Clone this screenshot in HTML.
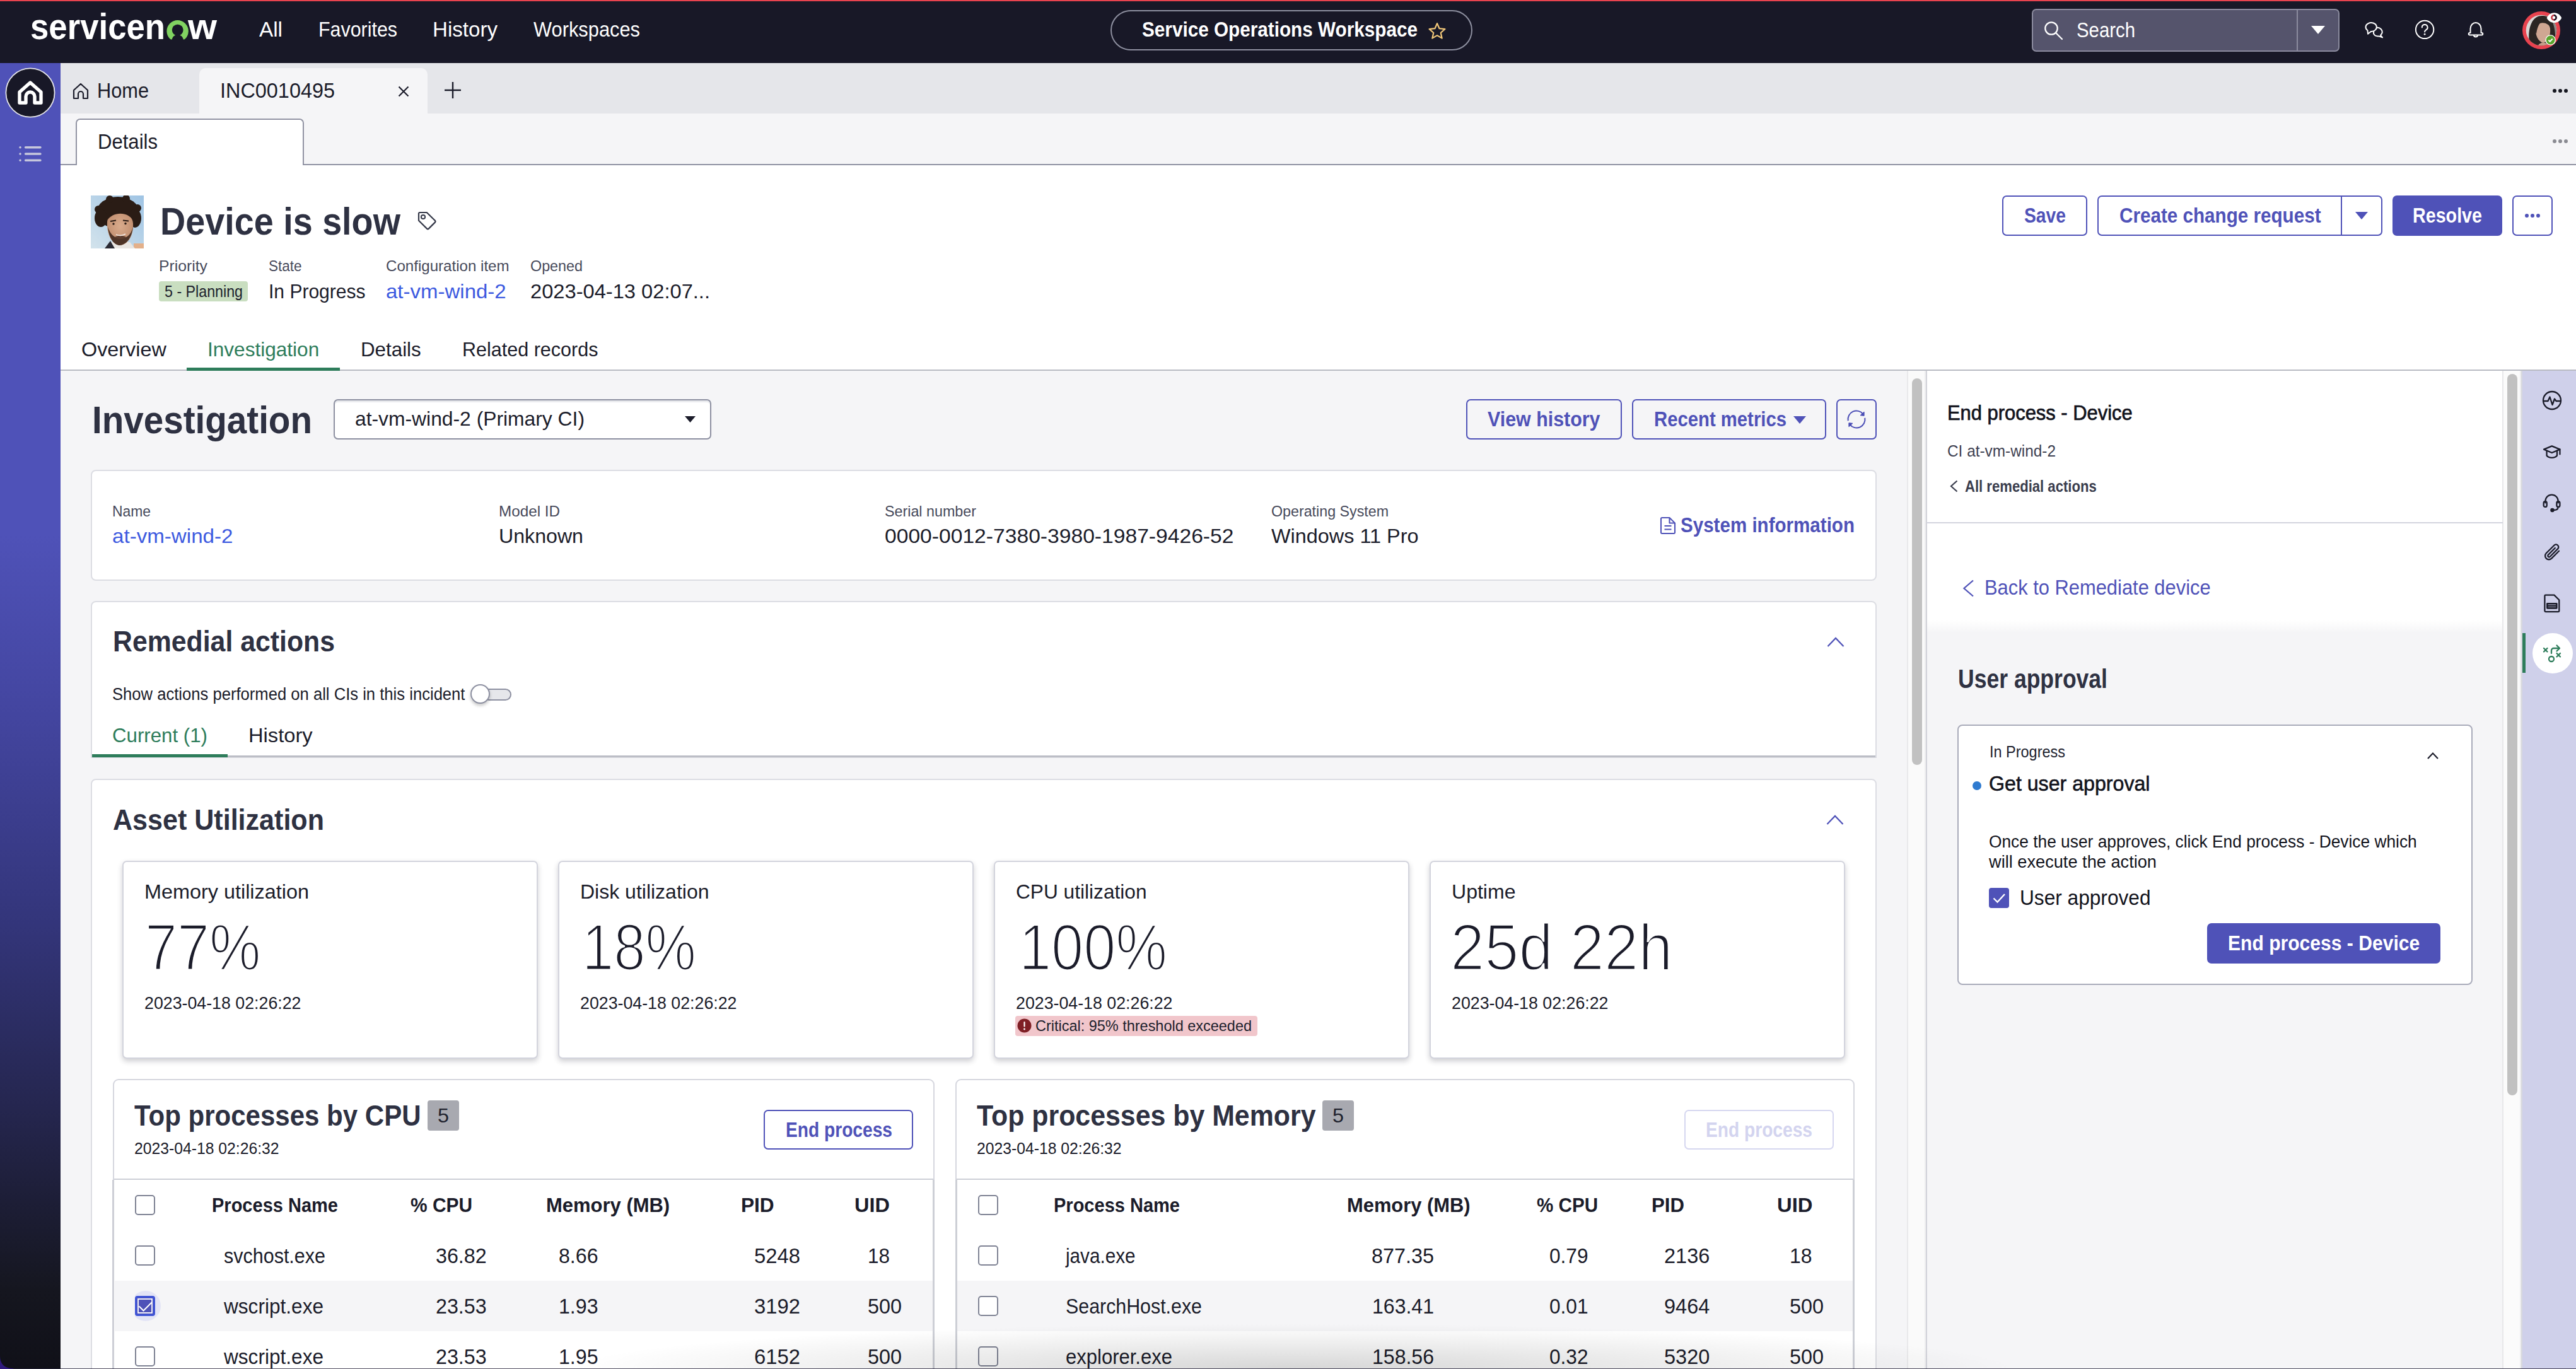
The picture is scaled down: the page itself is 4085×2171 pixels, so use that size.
<!DOCTYPE html>
<html lang="en"><head><meta charset="utf-8"><title>Device is slow | Service Operations Workspace</title>
<style>
html,body{margin:0;padding:0;}
body{width:4085px;height:2171px;background:#f5f5f7;font-family:"Liberation Sans",sans-serif;}
#app{position:relative;width:4085px;height:2171px;overflow:hidden;background:#f5f5f7;}
.b{position:absolute;box-sizing:border-box;display:block;}
.t{position:absolute;white-space:nowrap;transform-origin:0 50%;display:block;}
</style></head><body><div id="app">
<div class="b" style="left:0.0px;top:0.0px;width:4085.0px;height:2.2px;background:#e8434f;"></div>
<div class="b" style="left:0.0px;top:2.2px;width:4085.0px;height:97.8px;background:#181827;"></div>
<div class="b" style="left:96.0px;top:100.0px;width:3989.0px;height:80.0px;background:#e5e6ea;"></div>
<div class="b" style="left:96.0px;top:180.0px;width:3989.0px;height:82.0px;background:#f5f5f7;"></div>
<div class="b" style="left:96.0px;top:260.0px;width:3989.0px;height:2.0px;background:#9193a3;"></div>
<div class="b" style="left:96.0px;top:262.0px;width:3989.0px;height:324.0px;background:#ffffff;"></div>
<div class="b" style="left:96.0px;top:585.5px;width:3989.0px;height:2.5px;background:#b9bbc3;"></div>
<div class="b" style="left:96.0px;top:588.0px;width:3989.0px;height:1583.0px;background:#f5f5f7;"></div>
<div class="b" style="left:0.0px;top:100.0px;width:96.0px;height:2071.0px;background:linear-gradient(180deg,#4f52b8 0%,#4f52b8 36%,#43459f 50%,#33357a 66%,#25264f 80%,#15161f 94%,#101018 100%);"></div>
<span class="t" style="top:12.9px;font-size:58px;line-height:58px;color:#ffffff;font-weight:700;left:48.2px;transform:scaleX(0.9091);">servicen</span>
<span class="t" style="top:12.9px;font-size:58px;line-height:58px;color:#ffffff;font-weight:700;left:298.0px;transform:scaleX(1.0196);">w</span>
<svg class="b" style="left:262.0px;top:30.0px;" width="40" height="36" viewBox="0 0 40 36"><clipPath id="lo"><rect x="0" y="0" width="40" height="32.5"/></clipPath><circle cx="19.6" cy="19.3" r="17.2" fill="#81d361" clip-path="url(#lo)"/><circle cx="19.7" cy="17.600" r="8.900" fill="#181827"/><path d="M10.700 33.500 C11 28 15 25.200 19.700 25.200 C24.400 25.200 28.400 28 28.700 33.500 Z" fill="#181827"/></svg>
<span class="t" style="top:31.0px;font-size:32.5px;line-height:32.5px;color:#ffffff;left:411.0px;transform:scaleX(1.0244);">All</span>
<span class="t" style="top:31.0px;font-size:32.5px;line-height:32.5px;color:#ffffff;left:505.0px;transform:scaleX(0.9353);">Favorites</span>
<span class="t" style="top:31.0px;font-size:32.5px;line-height:32.5px;color:#ffffff;left:686.0px;transform:scaleX(1.0186);">History</span>
<span class="t" style="top:31.0px;font-size:32.5px;line-height:32.5px;color:#ffffff;left:846.0px;transform:scaleX(0.9483);">Workspaces</span>
<div class="b" style="left:1761.0px;top:16.0px;width:574.0px;height:64.0px;border:2px solid #8e90a0;border-radius:32px;"></div>
<span class="t" style="top:30.7px;font-size:32.5px;line-height:32.5px;color:#ffffff;font-weight:700;left:1811.0px;transform:scaleX(0.9140);">Service Operations Workspace</span>
<svg class="b" style="left:2263.5px;top:34.0px;" width="30" height="30" viewBox="0 0 34 34"><path d="M17 3.5 L21 12.7 L31 13.7 L23.5 20.4 L25.7 30.2 L17 25.1 L8.3 30.2 L10.5 20.4 L3 13.7 L13 12.7 Z" fill="none" stroke="#f2c879" stroke-width="2.5" stroke-linejoin="round"/></svg>
<div class="b" style="left:3222.0px;top:14.0px;width:488.0px;height:68.0px;background:#55546c;border:2px solid #8b8b9e;border-radius:7px;"></div>
<div class="b" style="left:3642.0px;top:16.0px;width:2.0px;height:64.0px;background:#8b8b9e;"></div>
<svg class="b" style="left:3240.5px;top:33.0px;" width="32" height="32" viewBox="0 0 32 32"><circle cx="12" cy="12" r="9.700" fill="none" stroke="#fff" stroke-width="2.300"/><path d="M19 19 L29 29" stroke="#fff" stroke-width="2.300" stroke-linecap="round"/></svg>
<span class="t" style="top:31.8px;font-size:32.5px;line-height:32.5px;color:#ffffff;left:3293.0px;transform:scaleX(0.9031);">Search</span>
<svg class="b" style="left:3665.0px;top:41.0px;" width="22" height="14" viewBox="0 0 22 14"><path d="M0 0 L22 0 L11 13 Z" fill="#fff"/></svg>
<svg class="b" style="left:3748.0px;top:32.0px;" width="36" height="32" viewBox="0 0 36 32"><g fill="#181827" stroke="#fff" stroke-width="2" stroke-linejoin="round"><path d="M16.500 13.500 a8 6.800 0 1 1 10.500 10.300 l3 3.600 l-5.500 -2 a8 6.800 0 0 1 -8.500 -4 z"/><path d="M6.500 16.300 a8.700 7 0 1 1 5.300 1.700 l-4.800 3.800 z"/></g></svg>
<svg class="b" style="left:3828.0px;top:30.0px;" width="36" height="36" viewBox="0 0 36 36"><circle cx="17.100" cy="16.900" r="14.200" fill="none" stroke="#fff" stroke-width="2"/><path d="M12.800 13.400 a4.400 4.400 0 1 1 6.400 3.900 c-1.600 .9 -2.100 1.700 -2.100 3.300" fill="none" stroke="#fff" stroke-width="2" stroke-linecap="round"/><circle cx="17.100" cy="24.300" r="1.400" fill="#fff"/></svg>
<svg class="b" style="left:3910.0px;top:32.0px;" width="32" height="32" viewBox="0 0 32 32"><g fill="none" stroke="#fff" stroke-width="2" stroke-linejoin="round"><path d="M7.500 20 L7.500 13.500 a8.500 9.500 0 0 1 17 0 L24.500 20 L25.500 20 a1.500 1.500 0 0 1 0 3.500 L6.500 23.500 a1.500 1.500 0 0 1 0 -3.500 Z"/><path d="M12.800 24 a3.300 3.300 0 0 0 6.400 0"/></g></svg>
<svg class="b" style="left:3998.0px;top:14.0px;" width="70" height="70" viewBox="0 0 70 70"><circle cx="32" cy="34" r="30" fill="#e8434f"/><clipPath id="ua"><circle cx="32" cy="34" r="24.300"/></clipPath>
<g clip-path="url(#ua)"><rect x="0" y="0" width="70" height="70" fill="#d9d7d6"/><rect x="44" y="0" width="26" height="70" fill="#8e8a86"/>
<path d="M14 62 C8 30 18 10 34 11 C50 10 56 28 54 62 Z" fill="#2b2523"/>
<path d="M23 30 C24 20 44 19 46 31 C47 42 43 52 35 54 C27 52 22 42 23 30Z" fill="#cfa793"/>
<path d="M22 34 C22 22 30 16 38 18 C30 20 26 26 24 40Z" fill="#2b2523"/>
<path d="M27 58 C30 52 40 52 44 58 L44 70 L27 70Z" fill="#c49c88"/></g>
<circle cx="46.600" cy="49.500" r="8.300" fill="#fff"/><circle cx="46.600" cy="49.500" r="6.900" fill="#5aa52e"/><path d="M43.400 49.600 l2.300 2.300 l4 -4.400" fill="none" stroke="#fff" stroke-width="1.900"/>
<path d="M40.700 14.500 C45 3.500 60 3.500 64.100 14.500 C60 24.500 45 24.500 40.700 14.500z" fill="#fff"/><circle cx="52" cy="13.900" r="3.600" fill="#fff" stroke="#c0313d" stroke-width="2.400"/><path d="M52 10.300 a3.600 3.600 0 0 1 0 7.200" fill="none" stroke="#181827" stroke-width="2.400"/></svg>
<svg class="b" style="left:8.0px;top:107.4px;" width="80" height="80" viewBox="0 0 80 80"><circle cx="40" cy="40" r="38.600" fill="#181827" stroke="#e6e6ea" stroke-width="1.800"/><path d="M23 39 L40 24 L57 39 L57 56 L47 56 L47 46 a7 7 0 0 0 -14 0 L33 56 L23 56 Z" fill="none" stroke="#fff" stroke-width="5.400" stroke-linejoin="round"/></svg>
<svg class="b" style="left:28.0px;top:229.0px;" width="40" height="30" viewBox="0 0 40 30"><g stroke="#c6c7dc" stroke-width="3.400" stroke-linecap="round"><path d="M12.500 4.700 H36 M12.500 15 H36 M12.500 25.300 H36"/><path d="M4 4.700 H4.100 M4 15 H4.100 M4 25.300 H4.100"/></g></svg>
<svg class="b" style="left:114.0px;top:130.0px;" width="28" height="28" viewBox="0 0 28 28"><path d="M3 13 L14 3 L25 13 L25 26 L18 26 L18 19 a4 4 0 0 0 -8 0 L10 26 L3 26 Z" fill="none" stroke="#1b1c2a" stroke-width="2.2" stroke-linejoin="round"/></svg>
<span class="t" style="top:127.1px;font-size:33px;line-height:33px;color:#1b1c2a;left:154.0px;transform:scaleX(0.9315);">Home</span>
<div class="b" style="left:316.0px;top:108.0px;width:362.0px;height:72.0px;background:#f5f5f7;border-radius:10px 10px 0 0;"></div>
<span class="t" style="top:127.1px;font-size:33px;line-height:33px;color:#1b1c2a;left:349.0px;transform:scaleX(0.9821);">INC0010495</span>
<svg class="b" style="left:631.0px;top:136.0px;" width="18" height="18" viewBox="0 0 18 18"><path d="M1.5 1.5 L16.5 16.5 M16.5 1.5 L1.5 16.5" stroke="#1b1c2a" stroke-width="2.2"/></svg>
<svg class="b" style="left:704.0px;top:129.0px;" width="28" height="28" viewBox="0 0 28 28"><path d="M14 1 V27 M1 14 H27" stroke="#1b1c2a" stroke-width="2.4"/></svg>
<div class="b" style="left:4047.8px;top:140.9px;width:6.2px;height:6.2px;background:#15161f;border-radius:4px;"></div>
<div class="b" style="left:4047.8px;top:220.7px;width:6.2px;height:6.2px;background:#8a8b92;border-radius:4px;"></div>
<div class="b" style="left:4056.8px;top:140.9px;width:6.2px;height:6.2px;background:#15161f;border-radius:4px;"></div>
<div class="b" style="left:4056.8px;top:220.7px;width:6.2px;height:6.2px;background:#8a8b92;border-radius:4px;"></div>
<div class="b" style="left:4065.8px;top:140.9px;width:6.2px;height:6.2px;background:#15161f;border-radius:4px;"></div>
<div class="b" style="left:4065.8px;top:220.7px;width:6.2px;height:6.2px;background:#8a8b92;border-radius:4px;"></div>
<div class="b" style="left:120.0px;top:188.0px;width:362.0px;height:74.0px;background:#ffffff;border:2px solid #9193a3;border-radius:7px 7px 0 0;border-bottom:none;"></div>
<span class="t" style="top:207.6px;font-size:33.5px;line-height:33.5px;color:#1b1c2a;left:155.0px;transform:scaleX(0.9277);">Details</span>
<svg class="b" style="left:144.0px;top:310.0px;" width="84" height="84" viewBox="0 0 84 84"><defs><linearGradient id="avg" x1="1" y1="0" x2="0" y2="1"><stop offset="0" stop-color="#9fc4e4"/><stop offset="1" stop-color="#d3e3ec"/></linearGradient>
<radialGradient id="avf" cx=".5" cy=".4" r=".7"><stop offset="0" stop-color="#d9ab8c"/><stop offset="1" stop-color="#b98566"/></radialGradient></defs>
<rect width="84" height="84" fill="url(#avg)"/>
<rect x="68" y="76" width="16" height="8" fill="#e3b08a"/>
<path d="M22 84 L30 74 L62 74 L70 84 Z" fill="#e9e6e2"/><path d="M22 84 L31 72 L38 84 Z" fill="#2a2a33"/>
<ellipse cx="43" cy="27" rx="34" ry="25" fill="#2a1c15"/>
<ellipse cx="16" cy="36" rx="10" ry="14" fill="#2a1c15"/><ellipse cx="70" cy="36" rx="10" ry="15" fill="#2a1c15"/>
<circle cx="12" cy="22" r="6" fill="#2a1c15"/><circle cx="74" cy="20" r="6" fill="#2a1c15"/><circle cx="30" cy="6" r="6" fill="#2a1c15"/><circle cx="56" cy="5" r="6" fill="#2a1c15"/>
<path d="M26 42 C26 24 66 22 67 44 C68 62 60 78 46 79 C33 78 25 60 26 42Z" fill="url(#avf)"/>
<path d="M27 50 C29 70 38 79 46 79 C56 78 65 68 67 50 C63 64 56 68 47 68 C38 68 31 62 27 50Z" fill="#4d3427"/>
<path d="M38 66 C42 63 52 63 56 66 C52 70 42 70 38 66Z" fill="#5c3d2e"/>
<path d="M40 62 C44 64 51 64 55 61" fill="none" stroke="#f1e6df" stroke-width="1.600"/>
<path d="M31 41 l9 -1.500 M51 39.500 l9 1" stroke="#2a1c15" stroke-width="2.200"/>
<circle cx="36" cy="45" r="1.700" fill="#2a1c15"/><circle cx="55" cy="44.500" r="1.700" fill="#2a1c15"/>
<path d="M26 40 C30 22 60 20 67 40 C60 25 34 25 26 40Z" fill="#2a1c15"/></svg>
<span class="t" style="top:319.7px;font-size:62px;line-height:62px;color:#2e3142;font-weight:700;left:254.0px;transform:scaleX(0.8988);">Device is slow</span>
<svg class="b" style="left:660.0px;top:333.0px;" width="34" height="34" viewBox="0 0 34 34"><path d="M4 5.500 L4 16.800 L17 29.600 a2 2 0 0 0 2.800 0 L29.800 19.600 a2 2 0 0 0 0 -2.800 L16.800 4 L5.500 4 a1.500 1.500 0 0 0 -1.500 1.500 Z" fill="none" stroke="#343848" stroke-width="2.200" stroke-linejoin="round"/><circle cx="11" cy="11" r="3.100" fill="none" stroke="#343848" stroke-width="2"/></svg>
<span class="t" style="top:410.0px;font-size:24.5px;line-height:24.5px;color:#474a5b;left:252.0px;transform:scaleX(1.0101);">Priority</span>
<span class="t" style="top:410.0px;font-size:24.5px;line-height:24.5px;color:#474a5b;left:425.5px;transform:scaleX(0.9177);">State</span>
<span class="t" style="top:410.0px;font-size:24.5px;line-height:24.5px;color:#474a5b;left:612.0px;transform:scaleX(0.9838);">Configuration item</span>
<span class="t" style="top:410.0px;font-size:24.5px;line-height:24.5px;color:#474a5b;left:841.0px;transform:scaleX(0.9520);">Opened</span>
<div class="b" style="left:252.0px;top:446.0px;width:141.0px;height:32.0px;background:#c9dec0;border-radius:4px;"></div>
<span class="t" style="top:450.1px;font-size:25px;line-height:25px;color:#20222e;left:261.0px;transform:scaleX(0.9293);">5 - Planning</span>
<span class="t" style="top:446.3px;font-size:32px;line-height:32px;color:#1b1c2a;left:425.5px;transform:scaleX(0.9381);">In Progress</span>
<span class="t" style="top:446.3px;font-size:32px;line-height:32px;color:#3d5ae0;left:612.0px;transform:scaleX(1.0312);">at-vm-wind-2</span>
<span class="t" style="top:446.3px;font-size:32px;line-height:32px;color:#1b1c2a;left:841.0px;transform:scaleX(1.0203);">2023-04-13 02:07...</span>
<div class="b" style="left:3175.0px;top:310.0px;width:135.0px;height:64.0px;border:2px solid #4f52b8;border-radius:7px;"></div>
<span class="t" style="top:325.0px;font-size:33px;line-height:33px;color:#4f52b8;font-weight:700;left:3210.0px;transform:scaleX(0.8563);">Save</span>
<div class="b" style="left:3326.0px;top:310.0px;width:452.0px;height:64.0px;border:2px solid #4f52b8;border-radius:7px;"></div>
<span class="t" style="top:325.0px;font-size:33px;line-height:33px;color:#4f52b8;font-weight:700;left:3360.5px;transform:scaleX(0.8980);">Create change request</span>
<div class="b" style="left:3712.0px;top:312.0px;width:2.0px;height:60.0px;background:#4f52b8;"></div>
<svg class="b" style="left:3735.0px;top:336.0px;" width="20" height="12" viewBox="0 0 20 12"><path d="M0 0 L20 0 L10 12 Z" fill="#4f52b8"/></svg>
<div class="b" style="left:3794.0px;top:310.0px;width:174.0px;height:64.0px;background:#4f52b8;border-radius:7px;"></div>
<span class="t" style="top:325.0px;font-size:33px;line-height:33px;color:#ffffff;font-weight:700;left:3826.0px;transform:scaleX(0.8691);">Resolve</span>
<div class="b" style="left:3984.0px;top:310.0px;width:64.0px;height:64.0px;border:2px solid #4f52b8;border-radius:7px;"></div>
<div class="b" style="left:4003.5px;top:338.5px;width:6.0px;height:6.0px;background:#4f52b8;border-radius:3px;"></div>
<div class="b" style="left:4012.5px;top:338.5px;width:6.0px;height:6.0px;background:#4f52b8;border-radius:3px;"></div>
<div class="b" style="left:4021.5px;top:338.5px;width:6.0px;height:6.0px;background:#4f52b8;border-radius:3px;"></div>
<span class="t" style="top:537.5px;font-size:32px;line-height:32px;color:#1b1c2a;left:128.8px;transform:scaleX(1.0108);">Overview</span>
<span class="t" style="top:537.5px;font-size:32px;line-height:32px;color:#2e7d5b;left:328.8px;transform:scaleX(0.9862);">Investigation</span>
<span class="t" style="top:537.5px;font-size:32px;line-height:32px;color:#1b1c2a;left:571.7px;transform:scaleX(0.9784);">Details</span>
<span class="t" style="top:537.5px;font-size:32px;line-height:32px;color:#1b1c2a;left:733.0px;transform:scaleX(0.9535);">Related records</span>
<div class="b" style="left:295.6px;top:582.5px;width:243.0px;height:5.0px;background:#2e7d5b;"></div>
<span class="t" style="top:635.2px;font-size:62px;line-height:62px;color:#2e3142;font-weight:700;left:145.6px;transform:scaleX(0.9127);">Investigation</span>
<div class="b" style="left:529.0px;top:633.0px;width:599.0px;height:64.0px;background:#ffffff;border:2px solid #8d90a1;border-radius:7px;box-shadow:inset 0 3px 1px #e9eaee;"></div>
<span class="t" style="top:648.1px;font-size:32px;line-height:32px;color:#1b1c2a;left:563.0px;transform:scaleX(0.9939);">at-vm-wind-2 (Primary CI)</span>
<svg class="b" style="left:1086.0px;top:660.0px;" width="17" height="10" viewBox="0 0 17 10"><path d="M0 0 L17 0 L8.500 10 Z" fill="#1b1c2a"/></svg>
<div class="b" style="left:2325.0px;top:633.0px;width:246.5px;height:64.0px;border:2px solid #4f52b8;border-radius:7px;"></div>
<span class="t" style="top:647.8px;font-size:33px;line-height:33px;color:#4f52b8;font-weight:700;left:2359.0px;transform:scaleX(0.9210);">View history</span>
<div class="b" style="left:2588.0px;top:633.0px;width:307.5px;height:64.0px;border:2px solid #4f52b8;border-radius:7px;"></div>
<span class="t" style="top:647.8px;font-size:33px;line-height:33px;color:#4f52b8;font-weight:700;left:2623.0px;transform:scaleX(0.8875);">Recent metrics</span>
<svg class="b" style="left:2844.0px;top:660.0px;" width="20" height="12" viewBox="0 0 20 12"><path d="M0 0 L20 0 L10 12 Z" fill="#4f52b8"/></svg>
<div class="b" style="left:2912.0px;top:633.0px;width:64.0px;height:64.0px;border:2px solid #4f52b8;border-radius:7px;"></div>
<svg class="b" style="left:2925.9px;top:646.8px;" width="36" height="36" viewBox="0 0 36 36"><g fill="none" stroke="#4a4db5" stroke-width="2" stroke-linecap="butt"><path d="M4.700 20.300 A13.400 13.400 0 0 1 28.400 9.600"/><path d="M31.300 15.700 A13.400 13.400 0 0 1 7.600 26.400"/></g><path d="M30.100 6.200 L30.100 12.300 L24 11.700 Z M5.900 23.700 L5.900 29.800 L12 24.300 Z" fill="#4a4db5" stroke="#4a4db5" stroke-width="1" stroke-linejoin="round"/></svg>
<div class="b" style="left:144.0px;top:745.0px;width:2832.0px;height:176.0px;background:#ffffff;border:2px solid #dcdde3;border-radius:8px;"></div>
<span class="t" style="top:799.0px;font-size:24.5px;line-height:24.5px;color:#474a5b;left:178.0px;transform:scaleX(0.9334);">Name</span>
<span class="t" style="top:833.9px;font-size:32px;line-height:32px;color:#3d5ae0;left:178.0px;transform:scaleX(1.0355);">at-vm-wind-2</span>
<span class="t" style="top:799.0px;font-size:24.5px;line-height:24.5px;color:#474a5b;left:791.0px;transform:scaleX(0.9894);">Model ID</span>
<span class="t" style="top:833.9px;font-size:32px;line-height:32px;color:#1b1c2a;left:791.0px;transform:scaleX(1.0044);">Unknown</span>
<span class="t" style="top:799.0px;font-size:24.5px;line-height:24.5px;color:#474a5b;left:1403.0px;transform:scaleX(0.9507);">Serial number</span>
<span class="t" style="top:833.9px;font-size:32px;line-height:32px;color:#1b1c2a;left:1403.0px;transform:scaleX(1.0509);">0000-0012-7380-3980-1987-9426-52</span>
<span class="t" style="top:799.0px;font-size:24.5px;line-height:24.5px;color:#474a5b;left:2016.0px;transform:scaleX(0.9485);">Operating System</span>
<span class="t" style="top:833.9px;font-size:32px;line-height:32px;color:#1b1c2a;left:2016.0px;transform:scaleX(1.0125);">Windows 11 Pro</span>
<svg class="b" style="left:2631.0px;top:818.0px;" width="28" height="30" viewBox="0 0 28 30"><g fill="none" stroke="#4f52b8" stroke-width="2.100" stroke-linejoin="round"><path d="M3 4.500 a1.500 1.500 0 0 1 1.500 -1.500 L16.500 3 L25 11.500 L25 26.500 a1.500 1.500 0 0 1 -1.500 1.500 L4.500 28 a1.500 1.500 0 0 1 -1.500 -1.500 Z"/><path d="M16.500 3 L16.500 11.500 L25 11.500"/><path d="M8.500 16 H19.500 M8.500 21.500 H19.500"/></g></svg>
<span class="t" style="top:816.3px;font-size:33px;line-height:33px;color:#4f52b8;font-weight:700;left:2665.0px;transform:scaleX(0.8959);">System information</span>
<div class="b" style="left:144.0px;top:953.0px;width:2832.0px;height:248.5px;background:#ffffff;border:2px solid #dcdde3;border-radius:8px 8px 0 0;"></div>
<span class="t" style="top:993.5px;font-size:46.5px;line-height:46.5px;color:#2e3142;font-weight:700;left:178.8px;transform:scaleX(0.9203);">Remedial actions</span>
<svg class="b" style="left:2896.0px;top:1007.7px;" width="30" height="20" viewBox="0 0 30 20"><path d="M2.500 17 L15 4 L27.500 17" fill="none" stroke="#4f52b8" stroke-width="2.3"/></svg>
<span class="t" style="top:1088.4px;font-size:27px;line-height:27px;color:#1b1c2a;left:178.0px;transform:scaleX(0.9486);">Show actions performed on all CIs in this incident</span>
<div class="b" style="left:766.0px;top:1091.5px;width:45.0px;height:19.5px;background:#e6e7eb;border:2px solid #8d90a1;border-radius:10px;"></div>
<div class="b" style="left:746.0px;top:1085.3px;width:31.0px;height:31.0px;background:#ffffff;border:2px solid #8d90a1;border-radius:16px;box-shadow:0 3px 5px rgba(0,0,0,.22);"></div>
<span class="t" style="top:1149.6px;font-size:32px;line-height:32px;color:#2e7d5b;left:178.0px;transform:scaleX(0.9760);">Current (1)</span>
<span class="t" style="top:1149.6px;font-size:32px;line-height:32px;color:#1b1c2a;left:394.0px;transform:scaleX(1.0204);">History</span>
<div class="b" style="left:146.0px;top:1198.3px;width:2828.0px;height:2.7px;background:#bcbec6;"></div>
<div class="b" style="left:146.0px;top:1196.0px;width:215.0px;height:5.0px;background:#2e7d5b;"></div>
<div class="b" style="left:144.0px;top:1235.2px;width:2832.0px;height:1000.0px;background:#ffffff;border:2px solid #dcdde3;border-radius:8px;"></div>
<span class="t" style="top:1277.3px;font-size:46.5px;line-height:46.5px;color:#2e3142;font-weight:700;left:178.8px;transform:scaleX(0.9261);">Asset Utilization</span>
<svg class="b" style="left:2895.0px;top:1290.0px;" width="30" height="20" viewBox="0 0 30 20"><path d="M2.500 17 L15 4 L27.500 17" fill="none" stroke="#4f52b8" stroke-width="2.3"/></svg>
<div class="b" style="left:194.0px;top:1364.5px;width:659.0px;height:314.0px;background:#ffffff;border:2px solid #d3d4dd;border-radius:7px;box-shadow:0 4px 8px rgba(30,32,50,.22);"></div>
<span class="t" style="top:1399.4px;font-size:30.5px;line-height:30.5px;color:#1b1c2a;left:228.8px;transform:scaleX(1.0619);">Memory utilization</span>
<span class="t" style="top:1450.3px;font-size:104px;line-height:104px;color:#1b1c2a;left:229.5px;transform:scaleX(0.8815);-webkit-text-stroke:3.2px #fff;">77%</span>
<span class="t" style="top:1577.1px;font-size:27.5px;line-height:27.5px;color:#1b1c2a;left:228.8px;transform:scaleX(0.9731);">2023-04-18 02:26:22</span>
<div class="b" style="left:885.0px;top:1364.5px;width:659.0px;height:314.0px;background:#ffffff;border:2px solid #d3d4dd;border-radius:7px;box-shadow:0 4px 8px rgba(30,32,50,.22);"></div>
<span class="t" style="top:1399.4px;font-size:30.5px;line-height:30.5px;color:#1b1c2a;left:919.8px;transform:scaleX(1.0491);">Disk utilization</span>
<span class="t" style="top:1450.3px;font-size:104px;line-height:104px;color:#1b1c2a;left:922.5px;transform:scaleX(0.8695);-webkit-text-stroke:3.2px #fff;">18%</span>
<span class="t" style="top:1577.1px;font-size:27.5px;line-height:27.5px;color:#1b1c2a;left:919.8px;transform:scaleX(0.9731);">2023-04-18 02:26:22</span>
<div class="b" style="left:1576.0px;top:1364.5px;width:659.0px;height:314.0px;background:#ffffff;border:2px solid #d3d4dd;border-radius:7px;box-shadow:0 4px 8px rgba(30,32,50,.22);"></div>
<span class="t" style="top:1399.4px;font-size:30.5px;line-height:30.5px;color:#1b1c2a;left:1610.8px;transform:scaleX(1.0373);">CPU utilization</span>
<span class="t" style="top:1450.3px;font-size:104px;line-height:104px;color:#1b1c2a;left:1615.5px;transform:scaleX(0.8835);-webkit-text-stroke:3.2px #fff;">100%</span>
<span class="t" style="top:1577.1px;font-size:27.5px;line-height:27.5px;color:#1b1c2a;left:1610.8px;transform:scaleX(0.9731);">2023-04-18 02:26:22</span>
<div class="b" style="left:2267.0px;top:1364.5px;width:659.0px;height:314.0px;background:#ffffff;border:2px solid #d3d4dd;border-radius:7px;box-shadow:0 4px 8px rgba(30,32,50,.22);"></div>
<span class="t" style="top:1399.4px;font-size:30.5px;line-height:30.5px;color:#1b1c2a;left:2301.8px;transform:scaleX(1.0506);">Uptime</span>
<span class="t" style="top:1450.3px;font-size:104px;line-height:104px;color:#1b1c2a;left:2300.1px;transform:scaleX(0.9376);-webkit-text-stroke:3.2px #fff;">25d 22h</span>
<span class="t" style="top:1577.1px;font-size:27.5px;line-height:27.5px;color:#1b1c2a;left:2301.8px;transform:scaleX(0.9731);">2023-04-18 02:26:22</span>
<div class="b" style="left:1610.0px;top:1610.5px;width:383.5px;height:32.5px;background:#f1c6cb;border-radius:4px;"></div>
<svg class="b" style="left:1613.0px;top:1614.5px;" width="23" height="23" viewBox="0 0 23 23"><circle cx="11.500" cy="11.500" r="11" fill="#7f1f25"/><rect x="10.400" y="5" width="2.200" height="8.500" rx="1" fill="#fff"/><circle cx="11.500" cy="17" r="1.400" fill="#fff"/></svg>
<span class="t" style="top:1615.0px;font-size:24.5px;line-height:24.5px;color:#20222e;left:1642.0px;transform:scaleX(0.9576);">Critical: 95% threshold exceeded</span>
<div class="b" style="left:178.8px;top:1710.5px;width:1303.0px;height:520.0px;background:#ffffff;border:2px solid #d6d7df;border-radius:9px;"></div>
<span class="t" style="top:1745.8px;font-size:46.5px;line-height:46.5px;color:#2e3142;font-weight:700;left:212.5px;transform:scaleX(0.9035);">Top processes by CPU</span>
<div class="b" style="left:678.0px;top:1745.0px;width:50.0px;height:48.0px;background:#a8a9b0;border-radius:4px;"></div>
<span class="t" style="top:1752.6px;font-size:32px;line-height:32px;color:#20222e;left:693.5px;transform:scaleX(1.0114);">5</span>
<span class="t" style="top:1808.2px;font-size:26px;line-height:26px;color:#1b1c2a;left:212.5px;transform:scaleX(0.9506);">2023-04-18 02:26:32</span>
<div class="b" style="left:1211.4px;top:1759.5px;width:237.0px;height:63.0px;border:2px solid #4f52b8;border-radius:7px;"></div>
<span class="t" style="top:1774.6px;font-size:33px;line-height:33px;color:#4f52b8;font-weight:700;left:1245.6px;transform:scaleX(0.8532);">End process</span>
<div class="b" style="left:180.8px;top:1868.5px;width:1299.0px;height:2.0px;background:#cdcfd6;"></div>
<div class="b" style="left:178.3px;top:1870.5px;width:3.2px;height:400.0px;background:#cdcfd6;"></div>
<div class="b" style="left:1479.1px;top:1870.5px;width:3.2px;height:400.0px;background:#cdcfd6;"></div>
<div class="b" style="left:181.8px;top:2030.5px;width:1297.0px;height:80.0px;background:#f5f5f7;"></div>
<div class="b" style="left:214.0px;top:1895.0px;width:32.0px;height:32.0px;background:#ffffff;border:2px solid #7f8394;border-radius:5px;"></div>
<span class="t" style="top:1895.0px;font-size:32px;line-height:32px;color:#1b1c2a;font-weight:700;left:336.0px;transform:scaleX(0.9067);">Process Name</span>
<span class="t" style="top:1895.0px;font-size:32px;line-height:32px;color:#1b1c2a;font-weight:700;left:651.0px;transform:scaleX(0.9341);">% CPU</span>
<span class="t" style="top:1895.0px;font-size:32px;line-height:32px;color:#1b1c2a;font-weight:700;left:866.3px;transform:scaleX(0.9680);">Memory (MB)</span>
<span class="t" style="top:1895.0px;font-size:32px;line-height:32px;color:#1b1c2a;font-weight:700;left:1175.0px;transform:scaleX(0.9879);">PID</span>
<span class="t" style="top:1895.0px;font-size:32px;line-height:32px;color:#1b1c2a;font-weight:700;left:1355.4px;transform:scaleX(1.0161);">UID</span>
<div class="b" style="left:214.0px;top:1975.0px;width:32.0px;height:32.0px;background:#ffffff;border:2px solid #7f8394;border-radius:5px;"></div>
<span class="t" style="top:1975.7px;font-size:32.5px;line-height:32.5px;color:#1b1c2a;left:355.4px;transform:scaleX(0.9382);">svchost.exe</span>
<span class="t" style="top:1975.7px;font-size:32.5px;line-height:32.5px;color:#1b1c2a;left:691.0px;transform:scaleX(0.9922);">36.82</span>
<span class="t" style="top:1975.7px;font-size:32.5px;line-height:32.5px;color:#1b1c2a;left:886.0px;transform:scaleX(0.9880);">8.66</span>
<span class="t" style="top:1975.7px;font-size:32.5px;line-height:32.5px;color:#1b1c2a;left:1195.6px;transform:scaleX(1.0096);">5248</span>
<span class="t" style="top:1975.7px;font-size:32.5px;line-height:32.5px;color:#1b1c2a;left:1376.0px;transform:scaleX(0.9682);">18</span>
<div class="b" style="left:214px;top:2047px;width:41px;height:48px;overflow:hidden;"><div class="b" style="left:-7px;top:0;width:48px;height:48px;border-radius:24px;background:#e3e4f6;"></div></div>
<div class="b" style="left:214.0px;top:2055.0px;width:32.0px;height:32.0px;background:#4f52b8;border:3.5px solid #3f54d6;border-radius:4px;"></div>
<svg class="b" style="left:217.0px;top:2058.0px;" width="26" height="26" viewBox="0 0 26 26"><rect x="2" y="2" width="22" height="22" fill="none" stroke="#fff" stroke-width="1.800"/><path d="M3.500 13.500 L10.500 20.500 L23.500 7.500" fill="none" stroke="#fff" stroke-width="2"/></svg>
<span class="t" style="top:2055.7px;font-size:32.5px;line-height:32.5px;color:#1b1c2a;left:355.4px;transform:scaleX(0.9720);">wscript.exe</span>
<span class="t" style="top:2055.7px;font-size:32.5px;line-height:32.5px;color:#1b1c2a;left:691.0px;transform:scaleX(0.9922);">23.53</span>
<span class="t" style="top:2055.7px;font-size:32.5px;line-height:32.5px;color:#1b1c2a;left:886.0px;transform:scaleX(0.9880);">1.93</span>
<span class="t" style="top:2055.7px;font-size:32.5px;line-height:32.5px;color:#1b1c2a;left:1195.6px;transform:scaleX(1.0096);">3192</span>
<span class="t" style="top:2055.7px;font-size:32.5px;line-height:32.5px;color:#1b1c2a;left:1376.0px;transform:scaleX(0.9958);">500</span>
<div class="b" style="left:214.0px;top:2135.0px;width:32.0px;height:32.0px;background:#ffffff;border:2px solid #7f8394;border-radius:5px;"></div>
<span class="t" style="top:2135.7px;font-size:32.5px;line-height:32.5px;color:#1b1c2a;left:355.4px;transform:scaleX(0.9720);">wscript.exe</span>
<span class="t" style="top:2135.7px;font-size:32.5px;line-height:32.5px;color:#1b1c2a;left:691.0px;transform:scaleX(0.9922);">23.53</span>
<span class="t" style="top:2135.7px;font-size:32.5px;line-height:32.5px;color:#1b1c2a;left:886.0px;transform:scaleX(0.9880);">1.95</span>
<span class="t" style="top:2135.7px;font-size:32.5px;line-height:32.5px;color:#1b1c2a;left:1195.6px;transform:scaleX(1.0096);">6152</span>
<span class="t" style="top:2135.7px;font-size:32.5px;line-height:32.5px;color:#1b1c2a;left:1376.0px;transform:scaleX(0.9958);">500</span>
<div class="b" style="left:1515.0px;top:1710.5px;width:1425.5px;height:520.0px;background:#ffffff;border:2px solid #d6d7df;border-radius:9px;"></div>
<span class="t" style="top:1745.8px;font-size:46.5px;line-height:46.5px;color:#2e3142;font-weight:700;left:1548.7px;transform:scaleX(0.9217);">Top processes by Memory</span>
<div class="b" style="left:2097.0px;top:1745.0px;width:50.0px;height:48.0px;background:#a8a9b0;border-radius:4px;"></div>
<span class="t" style="top:1752.6px;font-size:32px;line-height:32px;color:#20222e;left:2112.5px;transform:scaleX(1.0114);">5</span>
<span class="t" style="top:1808.2px;font-size:26px;line-height:26px;color:#1b1c2a;left:1548.7px;transform:scaleX(0.9506);">2023-04-18 02:26:32</span>
<div class="b" style="left:2670.6px;top:1759.5px;width:237.0px;height:63.0px;border:2px solid #d6d7f0;border-radius:7px;"></div>
<span class="t" style="top:1774.6px;font-size:33px;line-height:33px;color:#d3d4ef;font-weight:700;left:2704.5px;transform:scaleX(0.8532);">End process</span>
<div class="b" style="left:1517.0px;top:1868.5px;width:1421.5px;height:2.0px;background:#cdcfd6;"></div>
<div class="b" style="left:1514.5px;top:1870.5px;width:3.2px;height:400.0px;background:#cdcfd6;"></div>
<div class="b" style="left:2937.8px;top:1870.5px;width:3.2px;height:400.0px;background:#cdcfd6;"></div>
<div class="b" style="left:1518.0px;top:2030.5px;width:1419.5px;height:80.0px;background:#f5f5f7;"></div>
<div class="b" style="left:1551.0px;top:1895.0px;width:32.0px;height:32.0px;background:#ffffff;border:2px solid #7f8394;border-radius:5px;"></div>
<span class="t" style="top:1895.0px;font-size:32px;line-height:32px;color:#1b1c2a;font-weight:700;left:1671.0px;transform:scaleX(0.9067);">Process Name</span>
<span class="t" style="top:1895.0px;font-size:32px;line-height:32px;color:#1b1c2a;font-weight:700;left:2136.0px;transform:scaleX(0.9646);">Memory (MB)</span>
<span class="t" style="top:1895.0px;font-size:32px;line-height:32px;color:#1b1c2a;font-weight:700;left:2437.0px;transform:scaleX(0.9246);">% CPU</span>
<span class="t" style="top:1895.0px;font-size:32px;line-height:32px;color:#1b1c2a;font-weight:700;left:2619.0px;transform:scaleX(0.9748);">PID</span>
<span class="t" style="top:1895.0px;font-size:32px;line-height:32px;color:#1b1c2a;font-weight:700;left:2817.6px;transform:scaleX(1.0252);">UID</span>
<div class="b" style="left:1551.0px;top:1975.0px;width:32.0px;height:32.0px;background:#ffffff;border:2px solid #7f8394;border-radius:5px;"></div>
<span class="t" style="top:1975.7px;font-size:32.5px;line-height:32.5px;color:#1b1c2a;left:1690.0px;transform:scaleX(0.9128);">java.exe</span>
<span class="t" style="top:1975.7px;font-size:32.5px;line-height:32.5px;color:#1b1c2a;left:2175.0px;transform:scaleX(0.9959);">877.35</span>
<span class="t" style="top:1975.7px;font-size:32.5px;line-height:32.5px;color:#1b1c2a;left:2457.0px;transform:scaleX(0.9722);">0.79</span>
<span class="t" style="top:1975.7px;font-size:32.5px;line-height:32.5px;color:#1b1c2a;left:2639.0px;">2136</span>
<span class="t" style="top:1975.7px;font-size:32.5px;line-height:32.5px;color:#1b1c2a;left:2838.0px;transform:scaleX(0.9820);">18</span>
<div class="b" style="left:1551.0px;top:2055.0px;width:32.0px;height:32.0px;background:#ffffff;border:2px solid #7f8394;border-radius:5px;"></div>
<span class="t" style="top:2055.7px;font-size:32.5px;line-height:32.5px;color:#1b1c2a;left:1690.0px;transform:scaleX(0.9341);">SearchHost.exe</span>
<span class="t" style="top:2055.7px;font-size:32.5px;line-height:32.5px;color:#1b1c2a;left:2176.0px;transform:scaleX(0.9858);">163.41</span>
<span class="t" style="top:2055.7px;font-size:32.5px;line-height:32.5px;color:#1b1c2a;left:2457.0px;transform:scaleX(0.9722);">0.01</span>
<span class="t" style="top:2055.7px;font-size:32.5px;line-height:32.5px;color:#1b1c2a;left:2639.0px;">9464</span>
<span class="t" style="top:2055.7px;font-size:32.5px;line-height:32.5px;color:#1b1c2a;left:2838.0px;transform:scaleX(0.9958);">500</span>
<div class="b" style="left:1551.0px;top:2135.0px;width:32.0px;height:32.0px;background:#ffffff;border:2px solid #7f8394;border-radius:5px;"></div>
<span class="t" style="top:2135.7px;font-size:32.5px;line-height:32.5px;color:#1b1c2a;left:1690.0px;transform:scaleX(0.9545);">explorer.exe</span>
<span class="t" style="top:2135.7px;font-size:32.5px;line-height:32.5px;color:#1b1c2a;left:2176.0px;transform:scaleX(0.9858);">158.56</span>
<span class="t" style="top:2135.7px;font-size:32.5px;line-height:32.5px;color:#1b1c2a;left:2457.0px;transform:scaleX(0.9722);">0.32</span>
<span class="t" style="top:2135.7px;font-size:32.5px;line-height:32.5px;color:#1b1c2a;left:2639.0px;">5320</span>
<span class="t" style="top:2135.7px;font-size:32.5px;line-height:32.5px;color:#1b1c2a;left:2838.0px;transform:scaleX(0.9958);">500</span>
<div class="b" style="left:3024.0px;top:588.0px;width:31.0px;height:1583.0px;background:#fafafa;"></div>
<div class="b" style="left:3024.0px;top:588.0px;width:2.0px;height:1583.0px;background:#e9e9eb;"></div>
<div class="b" style="left:3052.0px;top:588.0px;width:2.0px;height:1583.0px;background:#eeeeef;"></div>
<div class="b" style="left:3032.0px;top:600.0px;width:16.0px;height:613.0px;background:#c1c1c1;border-radius:8px;"></div>
<div class="b" style="left:3055.0px;top:588.0px;width:943.0px;height:1583.0px;background:#f5f5f7;"></div>
<div class="b" style="left:3055.0px;top:588.0px;width:914.0px;height:413.0px;background:#ffffff;"></div>
<div class="b" style="left:3055.0px;top:983.0px;width:914.0px;height:20.0px;background:linear-gradient(180deg,#ffffff,#f5f5f7);"></div>
<div class="b" style="left:3054.0px;top:588.0px;width:2.0px;height:1583.0px;background:#d2d3da;"></div>
<div class="b" style="left:3968.4px;top:588.0px;width:1.6px;height:1583.0px;background:#e8e8ea;"></div>
<div class="b" style="left:3970.0px;top:588.0px;width:26.0px;height:1583.0px;background:#fbfbfb;"></div>
<div class="b" style="left:3996.0px;top:588.0px;width:2.0px;height:1583.0px;background:#ededee;"></div>
<div class="b" style="left:3998.0px;top:588.0px;width:2.0px;height:1583.0px;background:#d6d7dd;"></div>
<div class="b" style="left:3976.0px;top:593.0px;width:16.0px;height:1144.0px;background:#c1c1c1;border-radius:8px;"></div>
<span class="t" style="top:639.4px;font-size:32.5px;line-height:32.5px;color:#12131c;left:3088.0px;transform:scaleX(0.9508);-webkit-text-stroke:0.7px #12131c;">End process - Device</span>
<span class="t" style="top:703.2px;font-size:25px;line-height:25px;color:#3f4252;left:3088.0px;transform:scaleX(0.9749);">CI at-vm-wind-2</span>
<svg class="b" style="left:3091.0px;top:761.0px;" width="16" height="20" viewBox="0 0 16 20"><path d="M12.500 1.500 L3 10 L12.500 18.500" fill="none" stroke="#3a3d4d" stroke-width="2.200"/></svg>
<span class="t" style="top:759.1px;font-size:25px;line-height:25px;color:#3a3d4d;font-weight:700;left:3116.0px;transform:scaleX(0.8836);">All remedial actions</span>
<div class="b" style="left:3055.0px;top:828.0px;width:914.0px;height:2.0px;background:#d3d4de;"></div>
<svg class="b" style="left:3111.0px;top:919.0px;" width="22" height="28" viewBox="0 0 22 28"><path d="M18 1.500 L3.500 14 L18 26.500" fill="none" stroke="#4f52b8" stroke-width="2.300"/></svg>
<span class="t" style="top:915.4px;font-size:33px;line-height:33px;color:#4f52b8;left:3147.0px;transform:scaleX(0.9354);">Back to Remediate device</span>
<span class="t" style="top:1056.1px;font-size:42px;line-height:42px;color:#2e3142;font-weight:700;left:3104.6px;transform:scaleX(0.8460);">User approval</span>
<div class="b" style="left:3103.5px;top:1148.8px;width:817.5px;height:413.5px;background:#ffffff;border:2px solid #a9abba;border-radius:8px;"></div>
<span class="t" style="top:1180.3px;font-size:25px;line-height:25px;color:#20222e;left:3155.0px;transform:scaleX(0.9387);">In Progress</span>
<svg class="b" style="left:3848.0px;top:1191.0px;" width="20" height="14" viewBox="0 0 20 14"><path d="M2 12 L10 3.500 L18 12" fill="none" stroke="#1b1c2a" stroke-width="2.200"/></svg>
<div class="b" style="left:3128.0px;top:1238.5px;width:14.0px;height:14.0px;background:#2f7bd0;border-radius:7px;"></div>
<span class="t" style="top:1226.3px;font-size:33.5px;line-height:33.5px;color:#12131c;left:3154.0px;transform:scaleX(0.9595);-webkit-text-stroke:0.6px #12131c;">Get user approval</span>
<span class="t" style="top:1321.8px;font-size:27px;line-height:27px;color:#12131c;left:3154.0px;transform:scaleX(0.9748);">Once the user approves, click End process - Device which</span>
<span class="t" style="top:1353.8px;font-size:27px;line-height:27px;color:#12131c;left:3154.0px;transform:scaleX(1.0070);">will execute the action</span>
<div class="b" style="left:3154.0px;top:1408.0px;width:32.0px;height:32.0px;background:#4f52b8;border-radius:4px;"></div>
<svg class="b" style="left:3157.0px;top:1411.0px;" width="26" height="26" viewBox="0 0 26 26"><path d="M4.500 13.500 L10.500 19.500 L22 7" fill="none" stroke="#fff" stroke-width="2.400"/></svg>
<span class="t" style="top:1406.8px;font-size:33.5px;line-height:33.5px;color:#12131c;left:3203.0px;transform:scaleX(0.9443);">User approved</span>
<div class="b" style="left:3500.0px;top:1464.0px;width:370.0px;height:63.5px;background:#4f52b8;border-radius:7px;"></div>
<span class="t" style="top:1479.1px;font-size:33.5px;line-height:33.5px;color:#ffffff;font-weight:700;left:3532.8px;transform:scaleX(0.8977);">End process - Device</span>
<div class="b" style="left:4000.0px;top:588.0px;width:85.0px;height:1583.0px;background:#cfd0ea;"></div>
<svg class="b" style="left:4029.0px;top:616.7px;" width="36.0" height="36.0" viewBox="0 0 36 36"><g fill="none" stroke="#1b1c2a" stroke-width="2.30" stroke-linecap="round" stroke-linejoin="round"><circle cx="18" cy="18" r="14"/><path d="M5 19 H11.500 L14.500 12.500 L18.500 25 L22 15.500 L24.500 19 H31"/></g></svg>
<svg class="b" style="left:4032.2px;top:701.7px;" width="29.5" height="29.5" viewBox="0 0 36 36"><g fill="none" stroke="#1b1c2a" stroke-width="2.80" stroke-linecap="round" stroke-linejoin="round"><path d="M2.500 13 L18 6.500 L33.500 13 L18 19.500 Z"/><path d="M8 16 V25 c4.500 5.500 15.500 5.500 20 0 V16"/><path d="M33.500 13 V22.500"/></g></svg>
<svg class="b" style="left:4030.4px;top:779.9px;" width="33.1" height="33.1" viewBox="0 0 36 36"><g fill="none" stroke="#1b1c2a" stroke-width="2.50" stroke-linecap="round" stroke-linejoin="round"><path d="M7 19 V16 a11 11 0 0 1 22 0 V19"/><rect x="4" y="16.500" width="5.500" height="9.500" rx="2.700"/><rect x="26.500" y="16.500" width="5.500" height="9.500" rx="2.700"/><path d="M29 26 c0 4 -4 5.500 -8 5.500"/><circle cx="19" cy="31.500" r="2.300" fill="#1b1c2a"/></g></svg>
<svg class="b" style="left:4029.9px;top:859.4px;" width="34.2" height="34.2" viewBox="0 0 36 36"><g fill="none" stroke="#1b1c2a" stroke-width="2.42" stroke-linecap="round" stroke-linejoin="round"><path d="M29.500 15.500 L17 28 a6.200 6.200 0 0 1 -8.800 -8.800 L21.500 6 a4.200 4.200 0 0 1 6 6 L14.500 25 a2.100 2.100 0 0 1 -3 -3 L23 10.500"/></g></svg>
<svg class="b" style="left:4031.2px;top:940.7px;" width="31.7" height="31.7" viewBox="0 0 36 36"><g fill="none" stroke="#1b1c2a" stroke-width="2.61" stroke-linecap="round" stroke-linejoin="round"><path d="M5 4.500 a1.500 1.500 0 0 1 1.500 -1.500 H22 L31 12 V31.500 a1.500 1.500 0 0 1 -1.500 1.500 H6.500 a1.500 1.500 0 0 1 -1.500 -1.500 Z"/><path d="M9.500 18.500 H26.500 V26.500 H9.500 Z M9.500 22.500 H26.500" stroke-width="3"/></g></svg>
<div class="b" style="left:4000.0px;top:1003.5px;width:4.5px;height:63.5px;background:#2e7d5b;"></div>
<div class="b" style="left:4016.0px;top:1003.5px;width:64.0px;height:64.0px;background:#ffffff;border-radius:32px;"></div>
<svg class="b" style="left:4027.0px;top:1015.0px;" width="40" height="40" viewBox="0 0 40 40"><g fill="none" stroke="#2e7d5b" stroke-width="2.300" stroke-linecap="round" stroke-linejoin="round"><path d="M7 13 l5.500 5.500 M12.500 13 l-5.500 5.500"/><path d="M27.500 21 l5.500 5.500 M33 21 l-5.500 5.500"/><circle cx="19" cy="30" r="4"/><path d="M19 21 V16.500 a3.500 3.500 0 0 1 3.500 -3.500 H31"/><path d="M27.500 8.500 L32 13 L27.500 17.500"/></g></svg>
<div class="b" style="left:900.0px;top:2096.0px;width:2300.0px;height:75.0px;background:radial-gradient(ellipse 1150px 72px at 50% 100%, rgba(0,0,0,.16), rgba(0,0,0,.07) 55%, rgba(0,0,0,0) 100%);"></div>
<div class="b" style="left:0.0px;top:2170.0px;width:4085.0px;height:1.0px;background:rgba(40,36,60,.8);"></div>
<svg class="b" style="left:0.0px;top:2150.0px;" width="22" height="21" viewBox="0 0 22 21"><path d="M0 0 C0 12 6 20 20 20 L22 21 L0 21 Z" fill="#2f1a7c"/></svg>
</div></body></html>
